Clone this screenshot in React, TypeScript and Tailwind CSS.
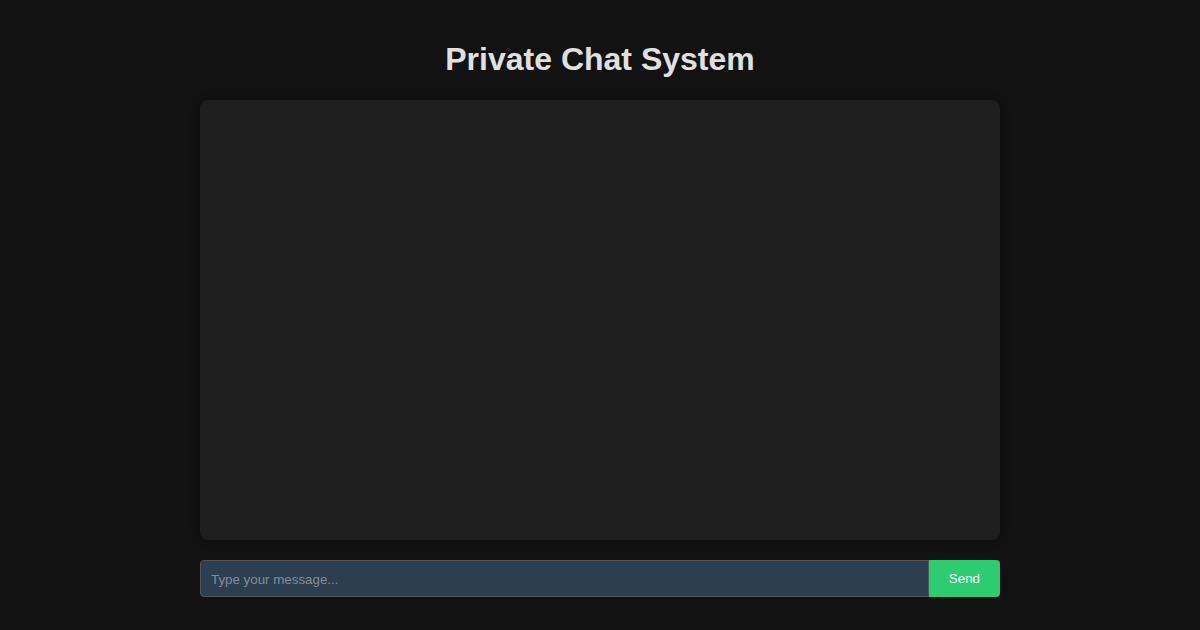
import { useState } from "react";

export default function App() {
  const [message, setMessage] = useState("");

  return (
    <div className="min-h-[630px] bg-[#121212] px-5 pt-5 font-['Liberation_Sans',Arial,sans-serif] text-[#e0e0e0]">
      <div className="mx-auto flex max-w-[800px] flex-col">
        <h1 className="my-[21.44px] text-center text-[32px] font-bold leading-[37px] text-[#e0e0e0]">
          Private Chat System
        </h1>

        <div className="h-[440px] overflow-y-auto rounded-lg bg-[#1e1e1e] shadow-[0_0_10px_rgba(0,0,0,0.3)]" />

        <form
          className="mt-5 flex"
          onSubmit={(event) => {
            event.preventDefault();
            setMessage("");
          }}
        >
          <input
            type="text"
            value={message}
            onChange={(event) => setMessage(event.target.value)}
            placeholder="Type your message..."
            className="h-[37px] flex-1 rounded-l border border-[#555] bg-[#2c3e50] px-[10px] pt-[2px] text-[13.33px] text-[#e0e0e0] outline-none placeholder:text-[#848d97]"
          />
          <button
            type="submit"
            className="h-[37px] rounded-r bg-[#2ecc71] px-5 pt-[2px] text-[13.33px] text-white"
          >
            Send
          </button>
        </form>
      </div>
    </div>
  );
}
